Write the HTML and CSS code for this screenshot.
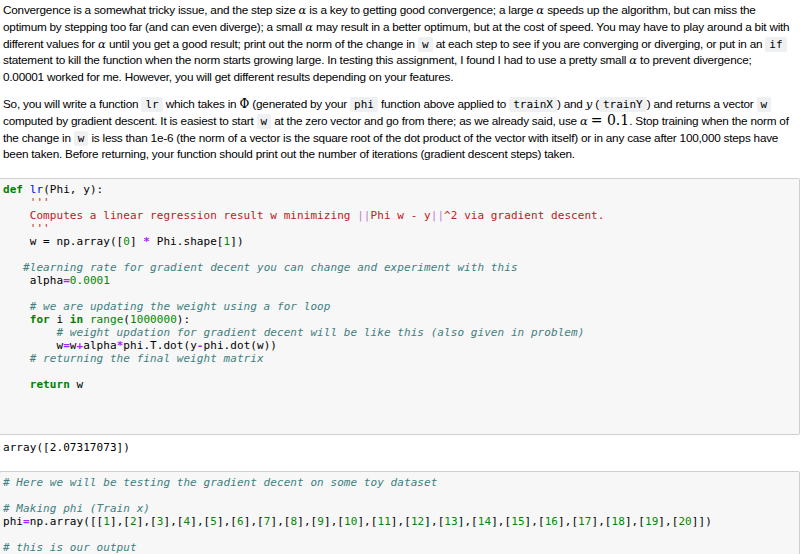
FILE: index.html
```html
<!DOCTYPE html>
<html>
<head>
<meta charset="utf-8">
<link rel="stylesheet" href="styles.css">
</head>
<body>
<div class="page">
  <p class="md">Convergence is a somewhat tricky issue, and the step size <span class="m">α</span> is a key to getting good convergence; a large <span class="m">α</span> speeds up the algorithm, but can miss the optimum by stepping too far (and can even diverge); a small <span class="m">α</span> may result in a better optimum, but at the cost of speed. You may have to play around a bit with different values for <span class="m">α</span> until you get a good result; print out the norm of the change in <code class="ic">w</code> at each step to see if you are converging or diverging, or put in an <code class="ic">if</code> statement to kill the function when the norm starts growing large. In testing this assignment, I found I had to use a pretty small <span class="m">α</span> to prevent divergence; <span class="nw">0.00001 worked</span> for me. However, you will get different results depending on your features.</p>
  <p class="md">So, you will write a function <code class="ic">lr</code> which takes in <span class="mu">Φ</span> (generated by your <code class="ic">phi</code> function above applied to <code class="ic">trainX</code>) and <span class="m">y</span> (<code class="ic">trainY</code>) and returns a vector <code class="ic">w</code> computed by gradient descent. It is easiest to start <code class="ic">w</code> at the zero vector and go from there; as we already said, use <span class="m">α</span> <span class="mu big">= 0.1</span>. Stop training when the norm of the change in <code class="ic">w</code> is less than 1e-6 (the norm of a vector is the square root of the dot product of the vector with itself) or in any case after 100,000 steps have been taken. Before returning, your function should print out the number of iterations (gradient descent steps) taken.</p>

  <div class="cell">
<pre class="code"><span class="kw">def</span> <span class="fn">lr</span>(Phi, y):
    <span class="st">'''</span>
<span class="st">    Computes a linear regression result w minimizing </span><span class="pp">||</span><span class="st">Phi w - y</span><span class="pp">||</span><span class="st">^2 via gradient descent.</span>
<span class="st">    '''</span>
    w = np.array([<span class="nu">0</span>] <span class="op">*</span> Phi.shape[<span class="nu">1</span>])

   <span class="cm">#learning rate for gradient decent you can change and experiment with this</span>
    alpha<span class="op">=</span><span class="nu">0.0001</span>

    <span class="cm"># we are updating the weight using a for loop</span>
    <span class="kw">for</span> i <span class="kw">in</span> <span class="bi">range</span>(<span class="nu">1000000</span>):
        <span class="cm"># weight updation for gradient decent will be like this (also given in problem)</span>
        w<span class="op">=</span>w<span class="op">+</span>alpha<span class="op">*</span>phi.T.dot(y<span class="op">-</span>phi.dot(w))
    <span class="cm"># returning the final weight matrix</span>

    <span class="kw">return</span> w



</pre>
  </div>
  <pre class="out">array([2.07317073])</pre>

  <div class="cell">
<pre class="code"><span class="cm"># Here we will be testing the gradient decent on some toy dataset</span>

<span class="cm"># Making phi (Train x)</span>
phi<span class="op">=</span>np.array([[<span class="nu">1</span>],[<span class="nu">2</span>],[<span class="nu">3</span>],[<span class="nu">4</span>],[<span class="nu">5</span>],[<span class="nu">6</span>],[<span class="nu">7</span>],[<span class="nu">8</span>],[<span class="nu">9</span>],[<span class="nu">10</span>],[<span class="nu">11</span>],[<span class="nu">12</span>],[<span class="nu">13</span>],[<span class="nu">14</span>],[<span class="nu">15</span>],[<span class="nu">16</span>],[<span class="nu">17</span>],[<span class="nu">18</span>],[<span class="nu">19</span>],[<span class="nu">20</span>]])

<span class="cm"># this is our output</span>
y<span class="op">=</span>np.array([<span class="nu">1</span>,<span class="nu">2</span>,<span class="nu">3</span>,<span class="nu">4</span>,<span class="nu">5</span>])
</pre>
  </div>
</div>
</body>
</html>
```
FILE: styles.css
```css
html, body {
  margin: 0;
  padding: 0;
  overflow: hidden;
  background: #fff;
  height: 554px;
}
.page {
  padding-top: 2px;
}
.md {
  margin: 0 6px 10px 3px;
  font-family: "Liberation Sans", Arial, sans-serif;
  font-size: 11.75px;
  letter-spacing: -0.22px;
  line-height: 16.8px;
  color: #000;
}
.md + .md {
  margin-bottom: 15px;
}
.nw {
  white-space: nowrap;
}
.m {
  font-family: "DejaVu Serif", "Liberation Serif", serif;
  font-style: italic;
  font-size: 11.5px;
  letter-spacing: 0;
  line-height: 0;
}
.mu {
  font-family: "DejaVu Serif", "Liberation Serif", serif;
  font-size: 12px;
  letter-spacing: 0;
  line-height: 0;
}
.mu.big {
  font-size: 14px;
}
.ic {
  font-family: "DejaVu Sans Mono", "Liberation Mono", monospace;
  font-size: 11px;
  letter-spacing: 0;
  line-height: 0;
  background: #eff0f1;
  padding: 1px 4px;
  border-radius: 2px;
}
.cell {
  margin: 0 5px 0 -1px;
  background: #f7f7f7;
  border: 1px solid #cfcfcf;
  border-radius: 2px;
}
.code, .out {
  margin: 0;
  padding: 4px 2px;
  font-family: "DejaVu Sans Mono", "Liberation Mono", monospace;
  font-size: 11px;
  letter-spacing: 0.06px;
  line-height: 13px;
  color: #000;
  white-space: pre;
}
.code {
  padding-left: 3px;
}
.out {
  padding: 6px 3px 17px;
}
.kw { color: #008000; font-weight: bold; }
.bi { color: #008000; }
.fn { color: #0000ff; }
.st { color: #ba2121; }
.pp { color: #c27ad0; }
.cm { color: #408080; font-style: italic; }
.nu { color: #008800; }
.op { color: #aa22ff; font-weight: bold; }
```
